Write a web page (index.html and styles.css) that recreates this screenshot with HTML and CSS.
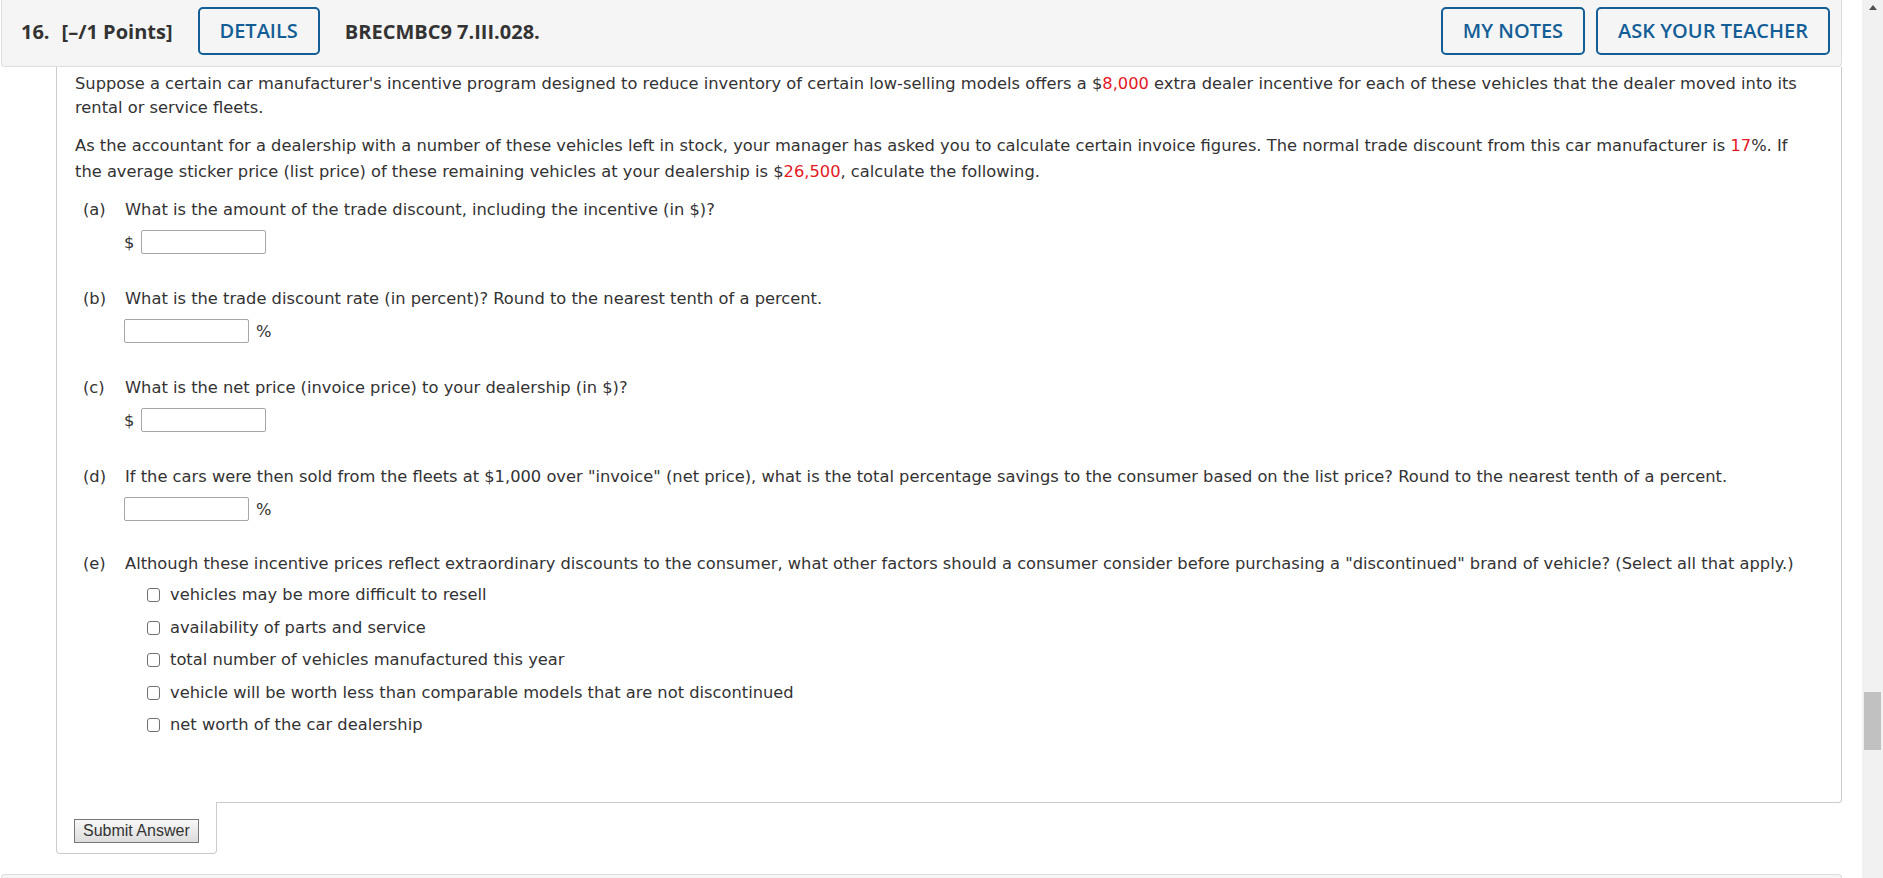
FILE: index.html
```html
<!DOCTYPE html>
<html lang="en">
<head>
<meta charset="utf-8">
<title>Question 16 – BRECMBC9 7.III.028.</title>
<link rel="stylesheet" href="styles.css">
</head>
<body>
<div class="page">
  <main class="main">
    <section class="question">
      <header class="q-head">
        <span class="q-num">16.</span>
        <span class="q-points">[–/1 Points]</span>
        <button class="head-btn" type="button">DETAILS</button>
        <span class="q-code">BRECMBC9 7.III.028.</span>
        <span class="spacer"></span>
        <button class="head-btn notes" type="button">MY NOTES</button>
        <button class="head-btn" type="button">ASK YOUR TEACHER</button>
      </header>
      <div class="q-body">
        <p class="para">Suppose a certain car manufacturer's incentive program designed to reduce inventory of certain low-selling models offers a $<span class="var">8,000</span> extra dealer incentive for each of these vehicles that the dealer moved into its rental or service fleets.</p>
        <p class="para gap">As the accountant for a dealership with a number of these vehicles left in stock, your manager has asked you to calculate certain invoice figures. The normal trade discount from this car manufacturer is <span class="var">17</span>%. If the average sticker price (list price) of these remaining vehicles at your dealership is $<span class="var">26,500</span>, calculate the following.</p>
        <ol class="parts">
          <li class="part">
            <div class="part-q"><span class="part-label">(a)</span><span>What is the amount of the trade discount, including the incentive (in $)?</span></div>
            <div class="answer"><span class="unit-dollar">$</span><input class="field" type="text" aria-label="answer a"></div>
          </li>
          <li class="part">
            <div class="part-q"><span class="part-label">(b)</span><span>What is the trade discount rate (in percent)? Round to the nearest tenth of a percent.</span></div>
            <div class="answer"><input class="field" type="text" aria-label="answer b"><span class="unit-pct">%</span></div>
          </li>
          <li class="part">
            <div class="part-q"><span class="part-label">(c)</span><span>What is the net price (invoice price) to your dealership (in $)?</span></div>
            <div class="answer"><span class="unit-dollar">$</span><input class="field" type="text" aria-label="answer c"></div>
          </li>
          <li class="part">
            <div class="part-q"><span class="part-label">(d)</span><span>If the cars were then sold from the fleets at $1,000 over "invoice" (net price), what is the total percentage savings to the consumer based on the list price? Round to the nearest tenth of a percent.</span></div>
            <div class="answer"><input class="field" type="text" aria-label="answer d"><span class="unit-pct">%</span></div>
          </li>
          <li class="part part-e">
            <div class="part-q"><span class="part-label">(e)</span><span>Although these incentive prices reflect extraordinary discounts to the consumer, what other factors should a consumer consider before purchasing a "discontinued" brand of vehicle? (Select all that apply.)</span></div>
            <ul class="choices">
              <li class="choice"><input class="check" type="checkbox"><span>vehicles may be more difficult to resell</span></li>
              <li class="choice"><input class="check" type="checkbox"><span>availability of parts and service</span></li>
              <li class="choice"><input class="check" type="checkbox"><span>total number of vehicles manufactured this year</span></li>
              <li class="choice"><input class="check" type="checkbox"><span>vehicle will be worth less than comparable models that are not discontinued</span></li>
              <li class="choice"><input class="check" type="checkbox"><span>net worth of the car dealership</span></li>
            </ul>
          </li>
        </ol>
      </div>
      <div class="submit-tab"><button class="submit" type="button">Submit Answer</button></div>
    </section>
    <section class="question next-q">
      <div class="next-head"></div>
    </section>
  </main>
  <div class="scrollbar">
    <div class="sb-up"><span class="sb-arrow"></span></div>
    <div class="sb-thumb"></div>
  </div>
</div>
</body>
</html>
```

FILE: styles.css
```css
* { box-sizing: border-box; }

html, body {
  margin: 0;
  padding: 0;
  background: #ffffff;
}

body {
  font-family: "DejaVu Sans", Verdana, sans-serif;
  color: #333333;
  overflow: hidden;
}

.page {
  display: flex;
  height: 878px;
}

.main {
  width: 1841px;
  margin-left: 1px;
  flex-shrink: 0;
}

/* ---------- header ---------- */
.q-head {
  display: flex;
  align-items: center;
  height: 67px;
  padding: 0 11px 4px 19px;
  background: #f5f5f5;
  border: 1px solid #dddddd;
  border-top: none;
  border-radius: 0 0 4px 4px;
  font-family: "Open Sans", "Liberation Sans", sans-serif;
  color: #333333;
}

.q-num {
  font-size: 20px;
  font-weight: 700;
  margin-right: 12px;
}

.q-points {
  font-size: 20px;
  font-weight: 700;
  margin-right: 25px;
}

.q-code {
  font-size: 20px;
  font-weight: 700;
  margin-left: 25px;
}

.spacer { flex: 1; }

.head-btn {
  height: 48px;
  padding: 0 20px;
  border: 2px solid #135e96;
  border-radius: 5px;
  background: transparent;
  color: #135e96;
  font-family: "Open Sans", "Liberation Sans", sans-serif;
  font-size: 20px;
  font-weight: 600;
  line-height: 1;
}

.head-btn.notes { margin-right: 11px; }

/* ---------- body ---------- */
.q-body {
  margin-left: 55px;
  border: 1px solid #cccccc;
  border-top: none;
  border-radius: 0 0 4px 0;
  padding: 5px 29px 60px 18px;
  font-size: 16.3px;
}

.para {
  margin: 0;
  line-height: 24px;
}

.para.gap {
  margin-top: 13px;
  line-height: 26px;
}

.var { color: #e3191f; }

.parts {
  list-style: none;
  margin: 14px 0 0 8px;
  padding: 0;
}

.part + .part { margin-top: 34px; }
.part.part-e { margin-top: 32px; }

.part-q {
  display: flex;
  line-height: 22px;
}

.part-label {
  width: 42px;
  flex-shrink: 0;
}

.answer {
  display: flex;
  align-items: center;
  height: 24px;
  margin: 9px 0 0 41px;
}

.unit-dollar { margin-right: 7px; }
.unit-pct { margin-left: 7px; }

.field {
  width: 125px;
  height: 24px;
  margin: 0;
  padding: 2px 4px;
  border: 1px solid #a6a6a6;
  border-radius: 2px;
  background: #ffffff;
  font: inherit;
}

.choices {
  list-style: none;
  margin: 4px 0 0 64px;
  padding: 0;
}

.choice {
  display: flex;
  align-items: center;
  height: 32.5px;
  line-height: 22px;
}

.check {
  appearance: none;
  -webkit-appearance: none;
  width: 13px;
  height: 14px;
  margin: 0 10px 0 0;
  flex-shrink: 0;
  border: 1px solid #6f6f6f;
  border-radius: 3px;
  background: #ffffff;
}

/* ---------- submit tab ---------- */
.submit-tab {
  position: relative;
  width: 161px;
  margin: -1px 0 0 55px;
  padding: 17px 0 10px 17px;
  background: #ffffff;
  border: 1px solid #cccccc;
  border-top: none;
  border-radius: 0 0 4px 4px;
}

.submit {
  display: block;
  height: 24px;
  padding: 0 8px;
  border: 1px solid #767676;
  border-radius: 0;
  background: linear-gradient(#f8f8f8, #dcdcdc);
  color: #333333;
  font-family: "Liberation Sans", Arial, sans-serif;
  font-size: 16px;
  line-height: 22px;
}

/* ---------- next question peek ---------- */
.next-q { margin-top: 20px; }

.next-head {
  height: 12px;
  background: #f5f5f5;
  border: 1px solid #dddddd;
  border-bottom: none;
  border-radius: 4px 4px 0 0;
}

/* ---------- scrollbar ---------- */
.scrollbar {
  width: 21px;
  margin-left: 20px;
  height: 878px;
  background: #f1f1f1;
  flex-shrink: 0;
}

.sb-up {
  height: 17px;
  display: flex;
  justify-content: center;
  padding-top: 5px;
}

.sb-arrow {
  width: 0;
  height: 0;
  border-left: 4px solid transparent;
  border-right: 4px solid transparent;
  border-bottom: 5px solid #505050;
}

.sb-thumb {
  width: 17px;
  height: 58px;
  margin: 675px 0 0 2px;
  background: #c1c1c1;
}
```
